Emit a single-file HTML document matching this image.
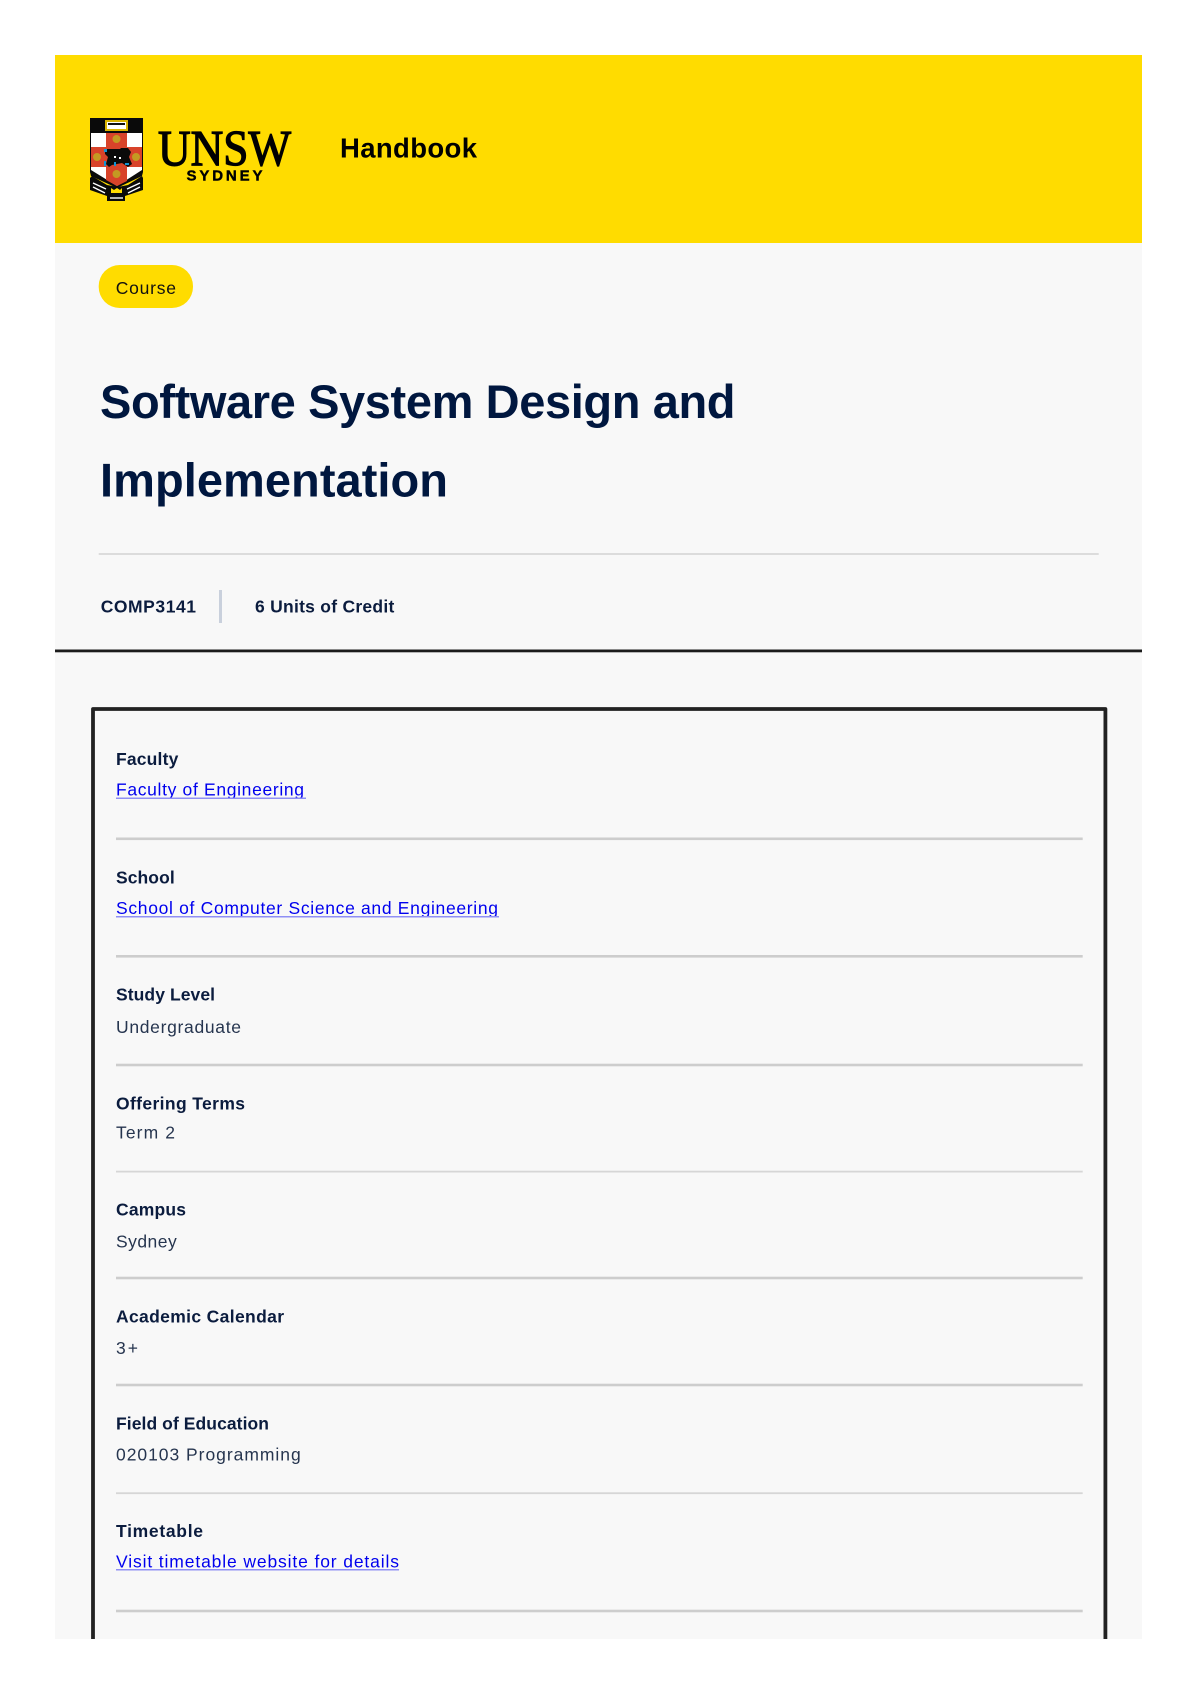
<!DOCTYPE html>
<html lang="en">
<head>
<meta charset="utf-8">
<title>Software System Design and Implementation</title>
<style>
html,body{margin:0;padding:0;background:#fff;width:1200px;height:1694px;overflow:hidden}
svg{display:block}
text{font-family:"Liberation Sans",sans-serif;filter:blur(.3px)}
.l{font-weight:700;font-size:17.5px;fill:#0b1c3e}
.v{font-size:17.5px;fill:#26354f}
.a{font-size:17.5px;fill:#0000ee}
.t{font-weight:700;font-size:47px;fill:#00173f}
</style>
</head>
<body>
<svg width="1200" height="1694" viewBox="0 0 1200 1694" xmlns="http://www.w3.org/2000/svg">
<rect width="1200" height="1694" fill="#fff"/>
<rect x="55" y="55" width="1087" height="1584" fill="#f8f8f8"/>
<rect x="55" y="55" width="1087" height="188" fill="#ffdc00"/>

<!-- crest -->
<path d="M90 118H143V172L142 176L117 188L91 176L90 172Z" fill="#0a0a0a"/>
<path d="M91 133H142V170L117 186L91 170Z" fill="#fff"/>
<path d="M106 133H127V147H142V167H127V181L117 186L106 180V167H91V147H106Z" fill="#d8432a"/>
<path d="M105 120H128V131H105Z" fill="#d9b400"/>
<path d="M107 122H126V129H107Z" fill="#fff"/>
<path d="M108 123H125V125H108Z" fill="#111"/>
<g fill="#c49a22">
<circle cx="116.500" cy="139" r="4"/><circle cx="97" cy="157" r="4"/><circle cx="136" cy="157" r="4"/><circle cx="116.500" cy="174" r="4"/>
</g>
<path d="M105 149H120L121 148H128L131 152L129 157L132 164L128 167L122 163L112 165L109 167L106 164L108 157L105 154Z" fill="#0a0a0a"/>
<g fill="#1593d0"><rect x="104" y="149" width="3" height="3"/><rect x="104" y="161" width="2" height="5"/><rect x="114" y="162" width="2" height="4"/><rect x="125" y="163" width="4" height="2"/></g>
<g fill="#fff"><rect x="114" y="156" width="2" height="2"/><rect x="119" y="157" width="2" height="2"/></g>
<path d="M90 178L92 176L107 185L118 187L128 185L142 176L143 178V190L125 196V201H107V196L90 190Z" fill="#0a0a0a"/>
<g fill="none" stroke="#fff" stroke-width="1.400">
<path d="M93 183L106 189M93 187L105 193"/>
<path d="M140 183L127 189M140 187L128 193"/>
<path d="M110 198H123"/>
</g>
<path d="M111 188L114 190L117 188L120 190L122 188V193H111Z" fill="#ffdc00"/>

<!-- wordmark -->
<text x="158" y="165.500" textLength="133" lengthAdjust="spacingAndGlyphs" style="font-family:'Liberation Serif',serif;font-size:51px;stroke:#000;stroke-width:1.300px" fill="#000">UNSW</text>
<text x="186.500" y="180.700" textLength="76" style="font-size:15px;font-weight:700;stroke:#000;stroke-width:.4px" fill="#000">SYDNEY</text>
<text x="340" y="157.700" textLength="137" style="font-size:27.500px;font-weight:700" fill="#000">Handbook</text>

<!-- pill -->
<rect x="98.700" y="265" width="94.300" height="43" rx="21" fill="#ffdc00"/>
<text x="115.700" y="294" textLength="60.300" style="font-size:17.500px" fill="#111">Course</text>

<!-- title -->
<text class="t" x="100" y="418" textLength="635.500">Software System Design and</text>
<text class="t" x="100" y="496.500" textLength="348">Implementation</text>

<rect x="98.700" y="553" width="1000" height="2" fill="#dcdcdc"/>
<text x="100.700" y="612.700" textLength="95.300" style="font-size:17.500px;font-weight:700" fill="#0b1c3e">COMP3141</text>
<rect x="219" y="590" width="3" height="33" fill="#c9d0dc"/>
<text x="255" y="612.700" textLength="139.300" style="font-size:17.500px;font-weight:700" fill="#0b1c3e">6 Units of Credit</text>
<rect x="55" y="649.500" width="1087" height="2.800" fill="#1c1c1c"/>

<!-- card border -->
<path d="M93 1639V709H1105.400V1639" fill="none" stroke="#222" stroke-width="3.800" stroke-linejoin="round"/>

<!-- rows -->
<text class="l" x="116" y="765" textLength="62.300">Faculty</text>
<text class="a" x="116" y="795.300" textLength="188">Faculty of Engineering</text>
<rect x="116" y="797.500" width="190" height="1.500" fill="#8f8ff5"/>
<rect x="116" y="837.500" width="966.700" height="2.600" fill="#cdcdcd"/>

<text class="l" x="116" y="883.300" textLength="58.700">School</text>
<text class="a" x="116" y="914" textLength="382">School of Computer Science and Engineering</text>
<rect x="116" y="916" width="383" height="1.500" fill="#8f8ff5"/>
<rect x="116" y="955" width="966.700" height="2.600" fill="#cdcdcd"/>

<text class="l" x="116" y="1000.400" textLength="99">Study Level</text>
<text class="v" x="116" y="1033" textLength="125">Undergraduate</text>
<rect x="116" y="1063.700" width="966.700" height="2.600" fill="#cdcdcd"/>

<text class="l" x="116" y="1109.400" textLength="129">Offering Terms</text>
<text class="v" x="116" y="1138.700" textLength="59">Term 2</text>
<rect x="116" y="1170.700" width="966.700" height="1.800" fill="#d6d6d6"/>

<text class="l" x="116" y="1215.400" textLength="70">Campus</text>
<text class="v" x="116" y="1247.700" textLength="60.700">Sydney</text>
<rect x="116" y="1276.700" width="966.700" height="2.600" fill="#cdcdcd"/>

<text class="l" x="116" y="1322.400" textLength="168">Academic Calendar</text>
<text class="v" x="116" y="1354" textLength="22">3+</text>
<rect x="116" y="1383.700" width="966.700" height="2.600" fill="#cdcdcd"/>

<text class="l" x="116" y="1429.400" textLength="153">Field of Education</text>
<text class="v" x="116" y="1460.700" textLength="184.700">020103 Programming</text>
<rect x="116" y="1492.300" width="966.700" height="1.800" fill="#d6d6d6"/>

<text class="l" x="116" y="1537" textLength="87">Timetable</text>
<text class="a" x="116" y="1567.700" textLength="283">Visit timetable website for details</text>
<rect x="116" y="1569" width="283" height="1.500" fill="#8f8ff5"/>
<rect x="116" y="1609.700" width="966.700" height="2.600" fill="#cdcdcd"/>
</svg>
</body>
</html>
